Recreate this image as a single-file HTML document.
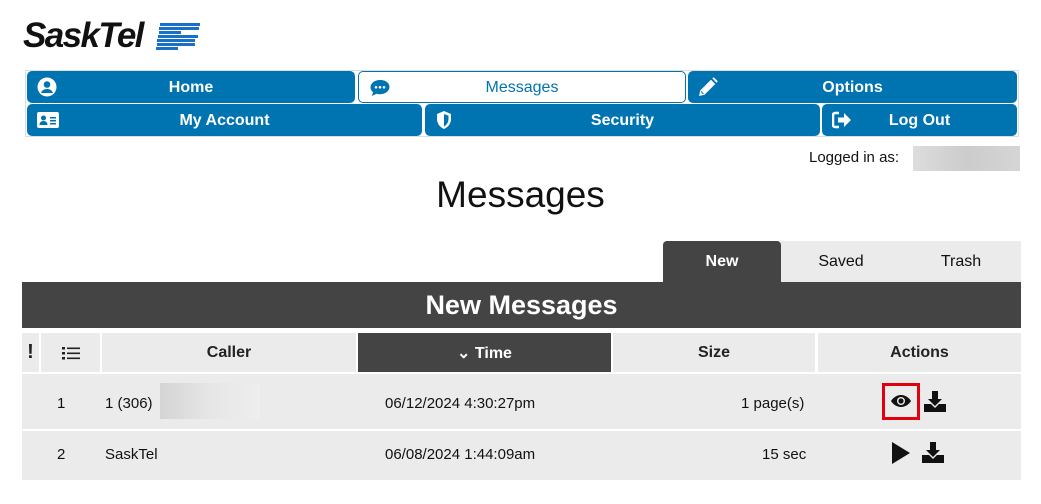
<!DOCTYPE html>
<html><head><meta charset="utf-8"><style>
*{box-sizing:border-box;margin:0;padding:0}
body{width:1041px;height:504px;background:#fff;font-family:"Liberation Sans",sans-serif;position:relative;overflow:hidden;color:#111}
.a{position:absolute}
.btn{position:absolute;background:#0073b1;color:#fff;border-radius:5px;font-size:16px;font-weight:bold;display:flex;align-items:center;justify-content:center;padding-top:2px}
.btn svg{position:absolute;left:10px;top:7px}
.th{position:absolute;top:333px;height:39px;background:#ebebeb;display:flex;align-items:center;justify-content:center;font-size:16px;font-weight:bold;color:#222}
.row{position:absolute;left:22px;width:999px;background:#ebebeb;font-size:15px}
.row span{position:absolute}
</style></head><body>
<div class="a" style="left:23px;top:16px;font-size:35px;font-weight:bold;font-style:italic;letter-spacing:-1.6px;color:#111">SaskTel</div>
<svg class="a" style="left:156px;top:23px" width="44" height="28"><g fill="#1a6fc9">
<rect x="4" y="0" width="40" height="3"/><rect x="3" y="4" width="40" height="3"/><rect x="3" y="8" width="22" height="3"/><rect x="2" y="12" width="40" height="3"/><rect x="1" y="16" width="38" height="3"/><rect x="1" y="20" width="38" height="3"/><rect x="0" y="24" width="22" height="3"/></g></svg>
<div class="a" style="left:25px;top:70px;width:994px;height:67px;border:1px solid #ddd"></div>
<div class="btn" style="left:27px;top:71px;width:328px;height:32px"><svg width="20" height="20" viewBox="0 0 20 20" style="top:6px"><circle cx="10" cy="10" r="9.5" fill="#fff"/><circle cx="10" cy="7.5" r="3.3" fill="#0073b1"/><path d="M4 16c1-3 3.5-4 6-4s5 1 6 4" fill="#0073b1"/></svg>Home</div>
<div class="btn" style="left:358px;top:71px;width:328px;height:32px;background:#fff;color:#0073b1;border:1px solid #0073b1;font-weight:normal"><svg width="22" height="18" viewBox="0 0 22 18"><path d="M11 1C5.5 1 1.5 4.3 1.5 8.3c0 2 1 3.7 2.6 5L3 17l4.5-2.3c1.1.3 2.3.5 3.5.5 5.5 0 9.5-3.3 9.5-7.3S16.5 1 11 1z" fill="#0073b1"/><circle cx="7" cy="8.3" r="1.3" fill="#fff"/><circle cx="11" cy="8.3" r="1.3" fill="#fff"/><circle cx="15" cy="8.3" r="1.3" fill="#fff"/></svg>Messages</div>
<div class="btn" style="left:688px;top:71px;width:329px;height:32px"><svg width="20" height="20" viewBox="0 0 20 20" style="top:6px"><path d="M1 19l1.2-5.5L13 2.7l4.3 4.3L6.5 17.8z" fill="#fff"/><path d="M14.3 1.4l1.4-1.2 4.1 4.1-1.3 1.4z" fill="#fff"/><path d="M3 14.5l2.5 2.5" stroke="#0073b1" stroke-width="1"/></svg>Options</div>
<div class="btn" style="left:27px;top:104px;width:395px;height:32px"><svg width="22" height="16" viewBox="0 0 22 16" style="top:8px"><rect x="0" y="0" width="22" height="16" rx="2" fill="#fff"/><circle cx="6.5" cy="6" r="2.5" fill="#0073b1"/><path d="M2.5 13c0-3 2-4 4-4s4 1 4 4z" fill="#0073b1"/><rect x="13" y="5" width="6" height="1.5" fill="#0073b1"/><rect x="13" y="8" width="6" height="1.5" fill="#0073b1"/><rect x="13" y="11" width="6" height="1.5" fill="#0073b1"/></svg>My Account</div>
<div class="btn" style="left:425px;top:104px;width:395px;height:32px"><svg width="18" height="20" viewBox="0 0 18 20" style="top:6px"><path d="M9 1L2 4v5c0 5 3.5 8.5 7 10 3.5-1.5 7-5 7-10V4z" fill="#fff"/><path d="M9 4v12.5c2.3-1.3 4.5-4 4.5-7.5V5.8z" fill="#0073b1"/></svg>Security</div>
<div class="btn" style="left:822px;top:104px;width:195px;height:32px"><svg width="20" height="18" viewBox="0 0 20 18"><path d="M7 2H3a2 2 0 0 0-2 2v10a2 2 0 0 0 2 2h4" stroke="#fff" stroke-width="2.5" fill="none"/><path d="M6 6.5h6V2l7 7-7 7v-4.5H6z" fill="#fff"/></svg>Log Out</div>
<div class="a" style="left:809px;top:149px;font-size:15px">Logged in as:</div>
<div class="a" style="left:913px;top:146px;width:107px;height:25px;background:linear-gradient(90deg,#ddd,#ccc,#d5d5d5)"></div>
<div class="a" style="left:0;width:1041px;top:174px;text-align:center;font-size:37px;color:#111">Messages</div>
<div class="a" style="left:781px;top:241px;width:240px;height:41px;background:#ebebeb"></div>
<div class="a" style="left:663px;top:241px;width:118px;height:41px;background:#444;border-radius:4px 4px 0 0;color:#fff;font-size:16px;font-weight:bold;text-align:center;line-height:42px">New</div>
<div class="a" style="left:781px;top:241px;width:120px;line-height:42px;text-align:center;font-size:16px">Saved</div>
<div class="a" style="left:901px;top:241px;width:120px;line-height:42px;text-align:center;font-size:16px">Trash</div>
<div class="a" style="left:22px;top:282px;width:999px;height:46px;background:#444;color:#fff;font-size:27px;font-weight:bold;text-align:center;line-height:46px">New Messages</div>
<div class="th" style="left:22px;width:17px;font-size:20px;font-weight:900">!</div>
<div class="th" style="left:41px;width:59px"><svg width="18" height="14" viewBox="0 0 18 14"><g fill="#222"><rect x="0" y="1" width="3" height="2.5"/><rect x="0" y="6" width="3" height="2.5"/><rect x="0" y="11" width="3" height="2.5"/><rect x="5" y="1.5" width="13" height="1.6"/><rect x="5" y="6.5" width="13" height="1.6"/><rect x="5" y="11.5" width="13" height="1.6"/></g></svg></div>
<div class="th" style="left:102px;width:254px">Caller</div>
<div class="th" style="left:358px;width:253px;background:#444;color:#fff">⌄ Time</div>
<div class="th" style="left:613px;width:202px">Size</div>
<div class="th" style="left:818px;width:203px">Actions</div>
<div class="row" style="top:374px;height:55px"><span style="left:35px;top:21px">1</span><span style="left:83px;top:21px">1 (306)</span><span style="left:138px;top:9px;width:100px;height:36px;background:linear-gradient(90deg,#d4d4d4,#e6e6e6,#eee)"></span><span style="left:363px;top:21px">06/12/2024 4:30:27pm</span><span style="left:719px;top:21px">1 page(s)</span>
<span style="left:860px;top:9px;width:38px;height:37px;border:3px solid #e00010"></span>
<svg style="position:absolute;left:868px;top:20px" width="22" height="14" viewBox="0 0 22 14"><path d="M11 1C6 1 2.5 4.5 1 7c1.5 2.5 5 6 10 6s8.5-3.5 10-6C19.5 4.5 16 1 11 1z" fill="#111"/><circle cx="11" cy="7" r="4" fill="#ebebeb"/><circle cx="11" cy="7" r="2.6" fill="#111"/></svg>
<svg style="position:absolute;left:902px;top:17px" width="22" height="21" viewBox="0 0 22 21"><path d="M8 0h6v8h4l-7 7-7-7h4z" fill="#111"/><path d="M0 13h7l4 4 4-4h7v8H0z" fill="#111"/></svg></div>
<div class="row" style="top:431px;height:49px"><span style="left:35px;top:15px">2</span><span style="left:83px;top:15px">SaskTel</span><span style="left:363px;top:15px">06/08/2024 1:44:09am</span><span style="left:740px;top:15px">15 sec</span>
<svg style="position:absolute;left:870px;top:11px" width="18" height="22" viewBox="0 0 18 22"><path d="M0 0l18 11L0 22z" fill="#111"/></svg>
<svg style="position:absolute;left:900px;top:11px" width="22" height="21" viewBox="0 0 22 21"><path d="M8 0h6v8h4l-7 7-7-7h4z" fill="#111"/><path d="M0 13h7l4 4 4-4h7v8H0z" fill="#111"/></svg></div>
</body></html>
